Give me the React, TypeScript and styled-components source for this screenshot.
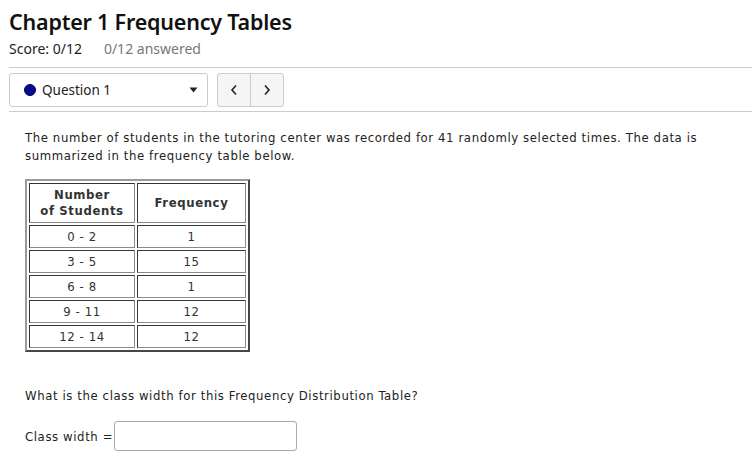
import React from 'react';
import styled, { createGlobalStyle } from 'styled-components';

const GlobalStyle = createGlobalStyle`
  html, body {
    margin: 0;
    padding: 0;
    background: #fff;
  }
  body {
    font-family: 'Noto Sans', 'Open Sans', sans-serif;
    color: #222;
  }
`;

const rows = [
  { range: '0 - 2', freq: 1 },
  { range: '3 - 5', freq: 15 },
  { range: '6 - 8', freq: 1 },
  { range: '9 - 11', freq: 12 },
  { range: '12 - 14', freq: 12 },
];

function App() {
  return (
    <Page>
      <GlobalStyle />
      <Header>
        <Title>Chapter 1 Frequency Tables</Title>
        <ScoreLine>
          <Score>Score: 0/12</Score>
          <Answered>0/12 answered</Answered>
        </ScoreLine>
      </Header>
      <Toolbar>
        <QuestionSelect>
          <Dot />
          <SelectLabel>Question 1</SelectLabel>
          <svg width="9" height="6" viewBox="0 0 9 6">
            <path d="M0.5 0.5 L8.5 0.5 L4.5 5.5 Z" fill="#222" />
          </svg>
        </QuestionSelect>
        <NavGroup>
          <NavButton>
            <svg width="8" height="12" viewBox="0 0 8 12">
              <path d="M6 1.5 L2 6 L6 10.5" fill="none" stroke="#222" strokeWidth="1.6" />
            </svg>
          </NavButton>
          <NavButton>
            <svg width="8" height="12" viewBox="0 0 8 12">
              <path d="M2 1.5 L6 6 L2 10.5" fill="none" stroke="#222" strokeWidth="1.6" />
            </svg>
          </NavButton>
        </NavGroup>
      </Toolbar>
      <Content>
        <Paragraph>
          The number of students in the tutoring center was recorded for 41 randomly selected times. The data is
          summarized in the frequency table below.
        </Paragraph>
        <FreqTable>
          <thead>
            <tr>
              <HeadCell $width={104}>Number<br />of Students</HeadCell>
              <HeadCell $width={107}>Frequency</HeadCell>
            </tr>
          </thead>
          <tbody>
            {rows.map((r) => (
              <tr key={r.range}>
                <Cell>{r.range}</Cell>
                <Cell>{r.freq}</Cell>
              </tr>
            ))}
          </tbody>
        </FreqTable>
        <Question>What is the class width for this Frequency Distribution Table?</Question>
        <AnswerRow>
          <AnswerLabel>Class width =</AnswerLabel>
          <AnswerInput type="text" />
        </AnswerRow>
      </Content>
    </Page>
  );
}

export default App;

const Page = styled.div`
  width: 752px;
  height: 465px;
  overflow: hidden;
`;

const Header = styled.div`
  padding: 8px 9px 9px 9px;
`;

const Title = styled.h1`
  margin: 0;
  font-family: 'Noto Sans', sans-serif;
  font-size: 21.5px;
  font-weight: 600;
  color: #111;
  line-height: 28px;
  letter-spacing: -0.2px;
`;

const ScoreLine = styled.div`
  display: flex;
  gap: 22px;
  margin-top: 3px;
  font-size: 14px;
  line-height: 19px;
`;

const Score = styled.span`
  color: #222;
`;

const Answered = styled.span`
  color: #777;
`;

const Toolbar = styled.div`
  display: flex;
  align-items: center;
  gap: 9px;
  margin-left: 9px;
  padding: 5px 0 4px 0;
  border-top: 1px solid #ccc;
  border-bottom: 1px solid #ccc;
`;

const QuestionSelect = styled.div`
  display: flex;
  align-items: center;
  box-sizing: border-box;
  width: 199px;
  height: 34px;
  padding: 0 9px 0 14px;
  border: 1px solid #ccc;
  border-radius: 3px;
  background: #fff;
`;

const Dot = styled.span`
  width: 12px;
  height: 12px;
  border-radius: 50%;
  background: #0a0a8c;
  border: 1px solid #000060;
  box-sizing: border-box;
  margin-right: 6px;
`;

const SelectLabel = styled.span`
  flex: 1;
  font-size: 13.5px;
  color: #222;
`;

const NavGroup = styled.div`
  display: flex;
  box-sizing: border-box;
  height: 34px;
  border: 1px solid #ccc;
  border-radius: 3px;
  background: #f5f5f5;
  overflow: hidden;
`;

const NavButton = styled.div`
  display: flex;
  align-items: center;
  justify-content: center;
  width: 32px;
  height: 100%;
  & + & {
    border-left: 1px solid #ccc;
  }
`;

const Content = styled.div`
  padding: 17px 25px 0 25px;
  font-family: 'DejaVu Sans Condensed', 'DejaVu Sans', sans-serif;
  font-size: 13px;
  letter-spacing: 0.6px;
  color: #222;
`;

const Paragraph = styled.p`
  margin: 0 0 14px 0;
  line-height: 18px;
`;

const FreqTable = styled.table`
  border: 2px outset #9a9a9a;
  border-spacing: 2px;
  border-collapse: separate;
  font-family: 'DejaVu Sans Condensed', 'DejaVu Sans', sans-serif;
  font-size: 13px;
  letter-spacing: 0.6px;
`;

const HeadCell = styled.th<{ $width: number }>`
  width: ${(p) => p.$width}px;
  height: 38px;
  padding: 0;
  border: 1px inset #8a8a8a;
  font-weight: bold;
  color: #333;
  line-height: 16px;
`;

const Cell = styled.td`
  height: 21px;
  padding: 0;
  text-align: center;
  border: 1px inset #8a8a8a;
  color: #333;
`;

const Question = styled.p`
  margin: 35px 0 0 0;
  line-height: 18px;
`;

const AnswerRow = styled.div`
  display: flex;
  align-items: center;
  margin-top: 16px;
`;

const AnswerLabel = styled.span`
  margin-right: 1px;
`;

const AnswerInput = styled.input`
  box-sizing: border-box;
  width: 183px;
  height: 30px;
  border: 1px solid #a9a9a9;
  border-radius: 3px;
  background: #fff;
`;
